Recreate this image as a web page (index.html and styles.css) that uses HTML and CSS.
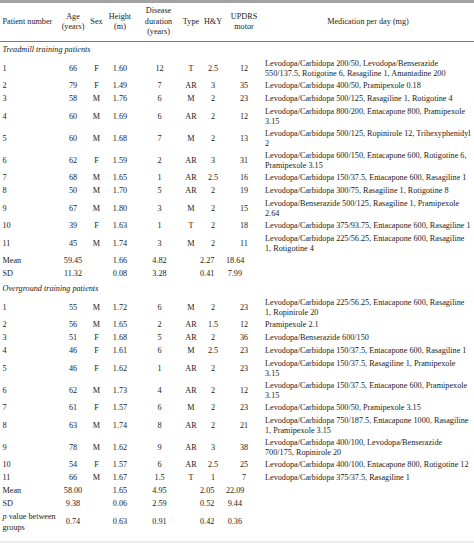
FILE: index.html
```html
<!DOCTYPE html>
<html>
<head>
<meta charset="utf-8">
<link rel="stylesheet" href="styles.css">
</head>
<body>
<div class="sheet">
<table class="tbl">
<colgroup>
<col class="c-pat"><col class="c-age"><col class="c-sex"><col class="c-ht"><col class="c-dur"><col class="c-type"><col class="c-hy"><col class="c-up"><col class="c-med">
</colgroup>
<thead>
<tr>
<th class="l">Patient number</th>
<th>Age<br>(years)</th>
<th>Sex</th>
<th>Height<br>(m)</th>
<th class="dur">Disease<br>duration<br>(years)</th>
<th>Type</th>
<th>H&amp;Y</th>
<th>UPDRS<br>motor</th>
<th>Medication per day (mg)</th>
</tr>
</thead>
<tbody>
<tr class="lab"><td colspan="9">Treadmill training patients</td></tr>
<tr class="d"><td class="l">1</td><td>66</td><td>F</td><td>1.60</td><td class="dur">12</td><td>T</td><td>2.5</td><td>12</td><td class="med">Levodopa/Carbidopa 200/50, Levodopa/Benserazide<br>550/137.5, Rotigotine 6, Rasagiline 1, Amantadine 200</td></tr>
<tr class="s"><td class="l">2</td><td>79</td><td>F</td><td>1.49</td><td class="dur">7</td><td>AR</td><td>3</td><td>35</td><td class="med">Levodopa/Carbidopa 400/50, Pramipexole 0.18</td></tr>
<tr class="s"><td class="l">3</td><td>58</td><td>M</td><td>1.76</td><td class="dur">6</td><td>M</td><td>2</td><td>23</td><td class="med">Levodopa/Carbidopa 500/125, Rasagiline 1, Rotigotine 4</td></tr>
<tr class="d"><td class="l">4</td><td>60</td><td>M</td><td>1.69</td><td class="dur">6</td><td>AR</td><td>2</td><td>12</td><td class="med">Levodopa/Carbidopa 800/200, Entacapone 800, Pramipexole<br>3.15</td></tr>
<tr class="d"><td class="l">5</td><td>60</td><td>M</td><td>1.68</td><td class="dur">7</td><td>M</td><td>2</td><td>13</td><td class="med">Levodopa/Carbidopa 500/125, Ropinirole 12, Trihexyphenidyl<br>2</td></tr>
<tr class="d"><td class="l">6</td><td>62</td><td>F</td><td>1.59</td><td class="dur">2</td><td>AR</td><td>3</td><td>31</td><td class="med">Levodopa/Carbidopa 600/150, Entacapone 600, Rotigotine 6,<br>Pramipexole 3.15</td></tr>
<tr class="s"><td class="l">7</td><td>68</td><td>M</td><td>1.65</td><td class="dur">1</td><td>AR</td><td>2.5</td><td>16</td><td class="med">Levodopa/Carbidopa 150/37.5, Entacapone 600, Rasagiline 1</td></tr>
<tr class="s"><td class="l">8</td><td>50</td><td>M</td><td>1.70</td><td class="dur">5</td><td>AR</td><td>2</td><td>19</td><td class="med">Levodopa/Carbidopa 300/75, Rasagiline 1, Rotigotine 8</td></tr>
<tr class="d"><td class="l">9</td><td>67</td><td>M</td><td>1.80</td><td class="dur">3</td><td>M</td><td>2</td><td>15</td><td class="med">Levodopa/Benserazide 500/125, Rasagiline 1, Pramipexole<br>2.64</td></tr>
<tr class="s"><td class="l">10</td><td>39</td><td>F</td><td>1.63</td><td class="dur">1</td><td>T</td><td>2</td><td>18</td><td class="med">Levodopa/Carbidopa 375/93.75, Entacapone 600, Rasagiline 1</td></tr>
<tr class="d"><td class="l">11</td><td>45</td><td>M</td><td>1.74</td><td class="dur">3</td><td>M</td><td>2</td><td>11</td><td class="med">Levodopa/Carbidopa 225/56.25, Entacapone 600, Rasagiline<br>1, Rotigotine 4</td></tr>
<tr class="s"><td class="l">Mean</td><td>59.45</td><td></td><td>1.66</td><td class="dur">4.82</td><td></td><td class="sum-hy">2.27</td><td class="sum-up">18.64</td><td></td></tr>
<tr class="s"><td class="l">SD</td><td>11.32</td><td></td><td>0.08</td><td class="dur">3.28</td><td></td><td class="sum-hy">0.41</td><td class="sum-up">7.99</td><td></td></tr>
<tr class="lab"><td colspan="9">Overground training patients</td></tr>
<tr class="d"><td class="l">1</td><td>55</td><td>M</td><td>1.72</td><td class="dur">6</td><td>M</td><td>2</td><td>23</td><td class="med">Levodopa/Carbidopa 225/56.25, Entacapone 600, Rasagiline<br>1, Ropinirole 20</td></tr>
<tr class="s"><td class="l">2</td><td>56</td><td>M</td><td>1.65</td><td class="dur">2</td><td>AR</td><td>1.5</td><td>12</td><td class="med">Pramipexole 2.1</td></tr>
<tr class="s"><td class="l">3</td><td>51</td><td>F</td><td>1.68</td><td class="dur">5</td><td>AR</td><td>2</td><td>36</td><td class="med">Levodopa/Benserazide 600/150</td></tr>
<tr class="s"><td class="l">4</td><td>46</td><td>F</td><td>1.61</td><td class="dur">6</td><td>M</td><td>2.5</td><td>23</td><td class="med">Levodopa/Carbidopa 150/37.5, Entacapone 600, Rasagiline 1</td></tr>
<tr class="d"><td class="l">5</td><td>46</td><td>F</td><td>1.62</td><td class="dur">1</td><td>AR</td><td>2</td><td>23</td><td class="med">Levodopa/Carbidopa 150/37.5, Rasagiline 1, Pramipexole<br>3.15</td></tr>
<tr class="d"><td class="l">6</td><td>62</td><td>M</td><td>1.73</td><td class="dur">4</td><td>AR</td><td>2</td><td>12</td><td class="med">Levodopa/Carbidopa 150/37.5, Entacapone 600, Pramipexole<br>3.15</td></tr>
<tr class="s"><td class="l">7</td><td>61</td><td>F</td><td>1.57</td><td class="dur">6</td><td>M</td><td>2</td><td>23</td><td class="med">Levodopa/Carbidopa 500/50, Pramipexole 3.15</td></tr>
<tr class="d"><td class="l">8</td><td>63</td><td>M</td><td>1.74</td><td class="dur">8</td><td>AR</td><td>2</td><td>21</td><td class="med">Levodopa/Carbidopa 750/187.5, Entacapone 1000, Rasagiline<br>1, Pramipexole 3.15</td></tr>
<tr class="d"><td class="l">9</td><td>78</td><td>M</td><td>1.62</td><td class="dur">9</td><td>AR</td><td>3</td><td>38</td><td class="med">Levodopa/Carbidopa 400/100, Levodopa/Benserazide<br>700/175, Ropinirole 20</td></tr>
<tr class="s"><td class="l">10</td><td>54</td><td>F</td><td>1.57</td><td class="dur">6</td><td>AR</td><td>2.5</td><td>25</td><td class="med">Levodopa/Carbidopa 400/100, Entacapone 800, Rotigotine 12</td></tr>
<tr class="s"><td class="l">11</td><td>66</td><td>M</td><td>1.67</td><td class="dur">1.5</td><td>T</td><td>1</td><td>7</td><td class="med">Levodopa/Carbidopa 375/37.5, Rasagiline 1</td></tr>
<tr class="s"><td class="l">Mean</td><td>58.00</td><td></td><td>1.65</td><td class="dur">4.95</td><td></td><td class="sum-hy">2.05</td><td class="sum-up">22.09</td><td></td></tr>
<tr class="s"><td class="l">SD</td><td>9.38</td><td></td><td>0.06</td><td class="dur">2.59</td><td></td><td class="sum-hy">0.52</td><td class="sum-up">9.44</td><td></td></tr>
<tr class="d"><td class="l pval"><i>p</i> value between<br>groups</td><td>0.74</td><td></td><td>0.63</td><td class="dur">0.91</td><td></td><td class="sum-hy">0.42</td><td class="sum-up">0.36</td><td></td></tr>
</tbody>
</table>
</div>
<div class="foot"></div>
</body>
</html>
```
FILE: styles.css
```css
html, body {
  margin: 0;
  padding: 0;
  background: #ffffff;
}
.sheet {
  height: 541px;
  box-sizing: border-box;
  border-top: 3px solid #a3a3a3;
  overflow: hidden;
}
.foot {
  height: 2px;
  background: #ededed;
}
.tbl {
  width: 474px;
  table-layout: fixed;
  border-collapse: separate;
  border-spacing: 0;
  font-family: "Liberation Serif", "Times New Roman", serif;
  font-size: 8.2px;
  line-height: 10.5px;
  color: #222222;
}
.c-pat { width: 60px; }
.c-age { width: 26px; }
.c-sex { width: 21px; }
.c-ht { width: 26px; }
.c-dur { width: 49px; }
.c-type { width: 18px; }
.c-hy { width: 26px; }
.c-up { width: 36px; }
.c-med { width: 212px; }
.tbl th {
  font-weight: normal;
  text-align: center;
  vertical-align: middle;
  height: 38px;
  padding: 0;
  border-bottom: 1px solid #7a7a7a;
}
.tbl td {
  padding: 0;
  text-align: center;
  vertical-align: middle;
}
.tbl .l {
  text-align: left;
  padding-left: 2.5px;
}
.tbl .pval {
  line-height: 11px;
}
.tbl .dur {
  padding-left: 4px;
}
.tbl th.dur {
  padding-left: 2px;
}
.tbl .med {
  text-align: left;
  padding-left: 3px;
  white-space: nowrap;
}
.tbl .sum-hy {
  text-align: right;
  padding-right: 14px;
}
.tbl .sum-up {
  text-align: right;
  padding-right: 20px;
}
.lab td {
  height: 16px;
  text-align: left;
  font-style: italic;
  padding-left: 2.5px;
}
.s td {
  height: 13px;
}
.d td {
  height: 22px;
}
```
